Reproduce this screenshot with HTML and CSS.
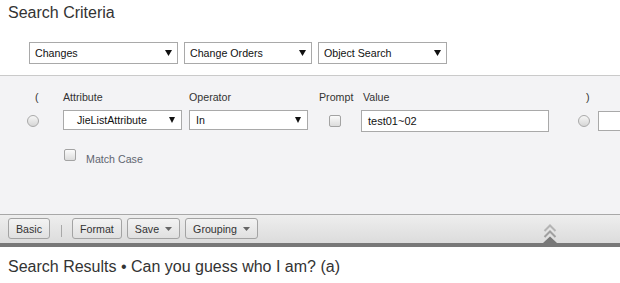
FILE: index.html
```html
<!DOCTYPE html>
<html>
<head>
<meta charset="utf-8">
<link rel="stylesheet" href="styles.css">
</head>
<body>
<h1 class="title">Search Criteria</h1>
<div class="types">
  <div class="sel big w1"><span>Changes</span><svg class="dd" width="7" height="6" viewBox="0 0 7 6"><polygon points="0,0 7,0 3.5,6" fill="#111"/></svg></div>
  <div class="sel big w2"><span>Change Orders</span><svg class="dd" width="7" height="6" viewBox="0 0 7 6"><polygon points="0,0 7,0 3.5,6" fill="#111"/></svg></div>
  <div class="sel big w3"><span>Object Search</span><svg class="dd" width="7" height="6" viewBox="0 0 7 6"><polygon points="0,0 7,0 3.5,6" fill="#111"/></svg></div>
</div>
<section class="panel">
  <div class="crit">
    <span class="lbl paren">(</span>
    <span class="lbl">Attribute</span>
    <span class="lbl">Operator</span>
    <span class="lbl">Prompt</span>
    <span class="lbl value-lbl">Value</span>
    <span class="lbl paren">)</span>
    <span></span>
    <span class="radio"></span>
    <div class="sel sm attr"><span>JieListAttribute</span><svg class="dd" width="6" height="6" viewBox="0 0 6 6"><polygon points="0,0 6,0 3,6" fill="#111"/></svg></div>
    <div class="sel sm op"><span>In</span><svg class="dd" width="6" height="6" viewBox="0 0 6 6"><polygon points="0,0 6,0 3,6" fill="#111"/></svg></div>
    <span class="check prompt"></span>
    <div class="input value-in">test01~02</div>
    <span class="radio"></span>
    <div class="input tail"></div>
  </div>
  <div class="match"><span class="check"></span><span class="match-lbl">Match Case</span></div>
</section>
<div class="toolbar">
  <button class="btn">Basic</button>
  <span class="sep"></span>
  <button class="btn">Format</button>
  <button class="btn">Save<svg class="caret" width="7" height="4" viewBox="0 0 7 4"><polygon points="0,0 7,0 3.5,4" fill="#666"/></svg></button>
  <button class="btn">Grouping<svg class="caret" width="7" height="4" viewBox="0 0 7 4"><polygon points="0,0 7,0 3.5,4" fill="#666"/></svg></button>
  <svg class="handle" width="16" height="19" viewBox="0 0 16 19">
    <polyline points="2.5,7 8,1.5 13.5,7" fill="none" stroke="#b4b4b4" stroke-width="2"/>
    <polyline points="2.5,13 8,7.5 13.5,13" fill="none" stroke="#a0a0a0" stroke-width="2"/>
    <polygon points="1,19 8,12.5 15,19" fill="#787878"/>
  </svg>
</div>
<div class="results">Search Results • Can you guess who I am? (a)</div>
</body>
</html>
```

FILE: styles.css
```css
html, body {
  margin: 0;
  padding: 0;
  background: #fff;
  overflow: hidden;
}
body {
  font-family: "Liberation Sans", Arial, sans-serif;
  color: #333;
  width: 620px;
}
.title {
  margin: 0;
  padding: 4px 8px 0;
  font-size: 16px;
  line-height: 18px;
  font-weight: normal;
  color: #333;
}
.types {
  display: flex;
  gap: 6px;
  padding: 20px 0 0 29px;
  height: 22px;
}
.sel {
  display: flex;
  align-items: center;
  justify-content: space-between;
  box-sizing: border-box;
  background: #fff;
  border: 1px solid #a9a9a9;
  font-size: 10.67px;
  color: #111;
  white-space: nowrap;
}
.sel.big {
  height: 22px;
  padding: 0 5px 0 5px;
}
.w1 { width: 149px; }
.w2 { width: 128px; }
.w3 { width: 129px; }
.dd { flex: none; }

.panel {
  margin-top: 11px;
  box-sizing: border-box;
  height: 139px;
  border-top: 1px solid #cacaca;
  background: #f3f3f5;
  padding: 15px 0 0 27px;
  overflow: hidden;
}
.crit {
  display: grid;
  grid-template-columns: 36px 126px 130px 42px 217px 20px 1fr;
  grid-template-rows: 13px 22px;
  row-gap: 6px;
  align-items: center;
}
.lbl {
  font-size: 10.67px;
  line-height: 13px;
  color: #333;
  white-space: nowrap;
}
.paren { padding-left: 8px; }
.value-lbl { padding-left: 2px; }
.radio {
  width: 12px;
  height: 12px;
  box-sizing: border-box;
  border-radius: 50%;
  border: 1px solid #a9a9a9;
  background: linear-gradient(#f6f6f6, #d6d6d6);
}
.sel.sm {
  align-self: start;
  height: 20px;
  width: 119px;
  padding: 0 6px 0 6px;
}
.attr span { padding-left: 7px; }
.check {
  display: block;
  width: 12px;
  height: 12px;
  box-sizing: border-box;
  border: 1px solid #a3a3a3;
  border-radius: 2px;
  background: linear-gradient(#fbfbfb, #dcdcdc);
}
.check.prompt { margin-left: 10px; }
.input {
  box-sizing: border-box;
  height: 22px;
  background: #fff;
  border: 1px solid #a9a9a9;
  font-size: 11px;
  line-height: 20px;
  color: #111;
  padding-left: 6px;
}
.value-in { width: 188px; }
.tail {
  width: 60px;
  height: 20px;
  align-self: start;
  margin-top: 1px;
}
.match {
  display: flex;
  align-items: flex-start;
  margin-top: 17px;
  padding-left: 37px;
}
.match-lbl {
  margin-left: 10px;
  margin-top: 4px;
  font-size: 10.67px;
  line-height: 13px;
  color: #5f6670;
}

.toolbar {
  display: flex;
  align-items: flex-start;
  box-sizing: content-box;
  height: 25px;
  padding: 3px 0 0 8px;
  border-top: 1px solid #a8a8a8;
  border-bottom: 4px solid #787878;
  background: linear-gradient(#eeeeee, #dcdcdc);
}
.btn {
  display: flex;
  align-items: center;
  gap: 6px;
  height: 21px;
  box-sizing: border-box;
  margin: 0 5px 0 0;
  padding: 0 7px;
  border: 1px solid #a3a3a3;
  border-radius: 3px;
  background: linear-gradient(#f3f3f3, #e0e0e0);
  font-family: "Liberation Sans", Arial, sans-serif;
  font-size: 10.67px;
  color: #333;
}
.sep {
  width: 1px;
  height: 12px;
  margin: 7px 10px 0 6px;
  background: #a8a8a8;
}
.caret { flex: none; }
.handle {
  margin-left: auto;
  margin-right: 62px;
  align-self: flex-end;
}
.results {
  padding: 11px 8px 0;
  font-size: 16px;
  line-height: 18px;
  color: #333;
  white-space: nowrap;
}
```
